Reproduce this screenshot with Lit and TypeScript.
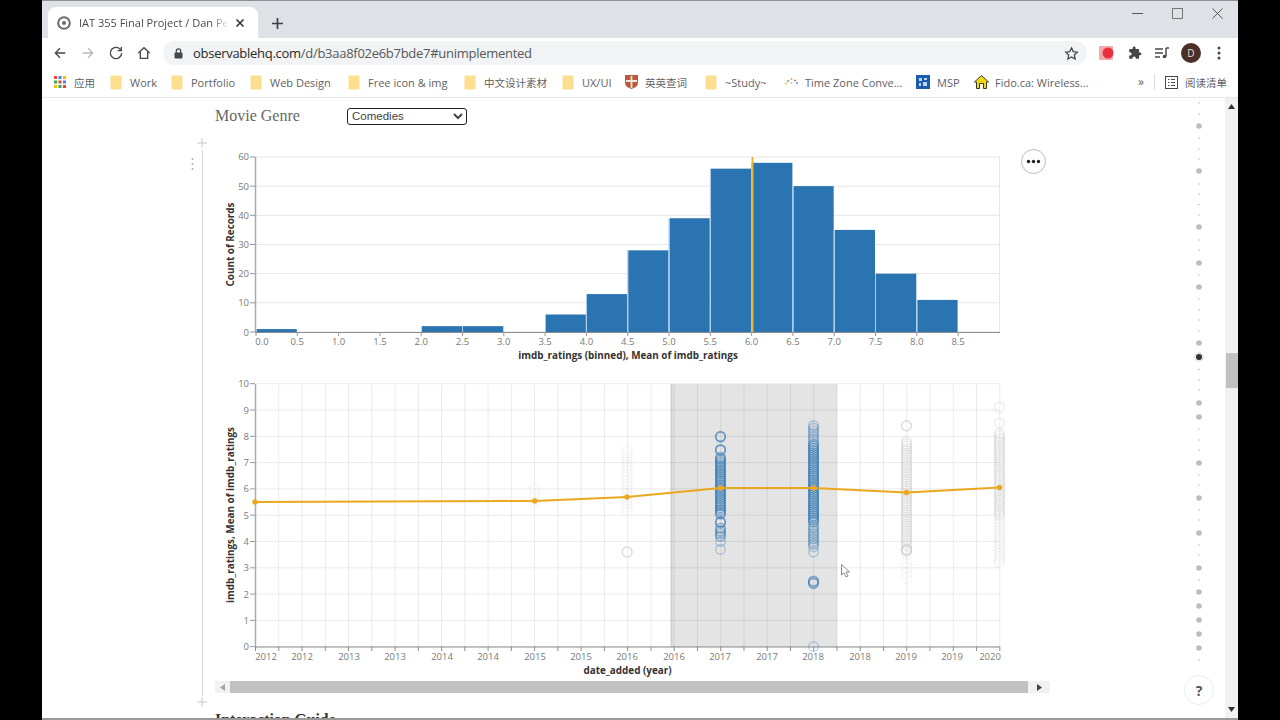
import { LitElement, html, css, svg } from "lit";
import { customElement } from "lit/decorators.js";

const range = (a: number, b: number, s: number) => {
  const o: number[] = [];
  for (let v = a; v >= b - 1e-6; v -= s) o.push(v);
  return o;
};

const BARS: [number, number][] = [[0, 1], [2, 2], [2.5, 2], [3.5, 6], [4, 13], [4.5, 28], [5, 39], [5.5, 56], [6, 58], [6.5, 50], [7, 35], [7.5, 20], [8, 11]];
const bx = (v: number) => 256 + v * 82.6;
const by = (c: number) => 332 - c * 2.917;
const sx = (k: number) => 255.5 + 23.26 * k;
const sy = (v: number) => 646.7 - v * 26.3;

const YEARS = [[266, "2012"], [302, "2012"], [349, "2013"], [395, "2013"], [442, "2014"], [488, "2014"], [535, "2015"], [581, "2015"], [627, "2016"], [674, "2016"], [720, "2017"], [767, "2017"], [813, "2018"], [860, "2018"], [906, "2019"], [952, "2019"], [990, "2020"]] as [number, string][];

const BLUE: [number, number[], number][] = [
  [720.5, [8, 7.97, 7.5, 7.47], 0.5],
  [720.5, range(7.2, 5.0, 0.08), 0.55],
  [720.5, [4.75, 4.72, 4.5, 4.4, 4.3, 4.2], 0.5],
  [720.5, [4.0, 3.7], 0.3],
  [813.5, range(8.4, 7.8, 0.1), 0.35],
  [813.5, range(7.7, 4.7, 0.08), 0.55],
  [813.5, range(4.6, 3.9, 0.1), 0.4],
  [813.5, [3.8, 3.6], 0.3],
  [813.5, [2.5, 2.45, 2.4], 0.5],
  [813.5, [0], 0.3],
];
const GREY: [number, number[], number][] = [
  [906.5, [8.4], 0.6],
  [906.5, range(7.8, 3.8, 0.09), 0.3],
  [906.5, [3.7, 3.65], 0.6],
  [906.5, [3.5, 3.2, 3, 2.8, 2.6], 0.12],
  [999.5, [9.1, 8.5], 0.3],
  [999.5, range(8.1, 5.0, 0.09), 0.28],
  [999.5, range(5.0, 3.1, 0.12), 0.16],
  [627, range(7.5, 5.1, 0.12), 0.1],
  [627, [3.6], 0.6],
  [534.7, [6, 5.8, 5.5], 0.15],
];
const LINE: [number, number][] = [[255, 502], [534.7, 501], [627, 497], [720.5, 488], [813.5, 488], [906.5, 492.5], [999.5, 487.5]];

const RAIL_BIG = [126, 171, 227, 263, 287, 343, 403, 417, 463, 498, 533, 568, 592, 606, 620, 634, 648];
const RAIL_SMALL = [103, 114, 138, 149, 159, 184, 194, 204.5, 215, 240, 250, 275, 299, 310, 320, 331, 369.5, 380, 390, 429, 440, 450, 475, 485, 510, 520, 545, 555, 580, 660];

type Mark = { x: number; next: number; label: string; icon: string; cjk?: boolean };
const BOOKMARKS: Mark[] = [
  { x: 53, next: 109, label: "应用", icon: "apps", cjk: true },
  { x: 109, next: 170, label: "Work", icon: "folder" },
  { x: 170, next: 249, label: "Portfolio", icon: "folder" },
  { x: 249, next: 347, label: "Web Design", icon: "folder" },
  { x: 347, next: 463, label: "Free icon & img", icon: "folder" },
  { x: 463, next: 561, label: "中文设计素材", icon: "folder", cjk: true },
  { x: 561, next: 624, label: "UX/UI", icon: "folder" },
  { x: 624, next: 704, label: "英英查词", icon: "shield", cjk: true },
  { x: 704, next: 784, label: "~Study~", icon: "folder" },
  { x: 784, next: 916, label: "Time Zone Conve...", icon: "dots" },
  { x: 916, next: 974, label: "MSP", icon: "msp" },
  { x: 974, next: 1134, label: "Fido.ca: Wireless...", icon: "home" },
];

const markIcon = (k: string) => {
  switch (k) {
    case "apps": {
      const cols = ["#ea4335", "#4285f4", "#fbbc05", "#34a853", "#ea4335", "#4285f4", "#fbbc05", "#34a853", "#ea4335"];
      return html`<svg width="12" height="12" viewBox="0 0 12 12">${cols.map((c, i) => svg`<rect x=${(i % 3) * 4.5} y=${Math.floor(i / 3) * 4.5} width="3" height="3" fill=${c}></rect>`)}</svg>`;
    }
    case "folder":
      return html`<svg width="12" height="15" viewBox="0 0 12 15"><rect x="0.5" y="0.5" width="11" height="14" rx="1" fill="#fbdf8e"></rect></svg>`;
    case "shield":
      return html`<svg width="13" height="14" viewBox="0 0 13 14"><path d="M0 0H13V7.500Q13 12 6.500 14 0 12 0 7.500Z" fill="#b9583c"></path><path d="M6.500 1V13M1 6H12" stroke="#f5e6da" stroke-width="1.800"></path></svg>`;
    case "dots":
      return html`<svg width="13" height="8" viewBox="0 0 13 8"><circle cx="6.500" cy="1" r="0.900" fill="#f0a030"></circle><circle cx="3" cy="3" r="0.900" fill="#4caf50"></circle><circle cx="10" cy="2.500" r="0.900" fill="#e0503a"></circle><circle cx="12" cy="5" r="0.900" fill="#4285f4"></circle><circle cx="6.500" cy="5" r="0.900" fill="#c0c0c0"></circle><circle cx="1" cy="5.500" r="0.900" fill="#f0c040"></circle></svg>`;
    case "msp":
      return html`<svg width="14" height="14" viewBox="0 0 14 14"><rect width="14" height="14" fill="#1a5cb0"></rect><path d="M3 3h3v3H3ZM8 3h3v2H8ZM3 8h2v3H3ZM7 7h4v4H7Z" fill="#bcd6f2"></path></svg>`;
    case "home":
      return html`<svg width="15" height="14" viewBox="0 0 15 14"><path d="M7.500 0.500 0.500 7H2.500V13.500H5.500V8.500H9.500V13.500H12.500V7H14.500Z" fill="#f0d818" stroke="#3a3a20" stroke-width="1"></path></svg>`;
  }
  return "";
};

@customElement("browser-chrome")
class BrowserChrome extends LitElement {
  static styles = css`
    :host { display: block; font-family: "Open Sans", "Noto Sans CJK SC", sans-serif; color: #5f6164; }
    svg { display: block; flex: none; }
    .topline { height: 1px; background: #8d8f91; }
    .tabstrip { height: 37px; background: #dee1e6; display: flex; align-items: flex-end; padding-left: 6px; }
    .tab { width: 210px; height: 31px; background: #fff; border-radius: 8px 8px 0 0; display: flex; align-items: center; padding-left: 9px; box-sizing: border-box; }
    .title { margin-left: 8px; width: 150px; font-size: 11px; white-space: nowrap; overflow: hidden; color: #4a4a4a; -webkit-mask-image: linear-gradient(90deg, #000 88%, transparent); mask-image: linear-gradient(90deg, #000 88%, transparent); }
    .tabx { margin-left: 6px; }
    .plus { margin-left: 13px; margin-bottom: 8px; }
    .winbtns { margin-left: auto; display: flex; gap: 29px; align-self: flex-start; margin-top: 7px; margin-right: 15px; }
    .toolbar { height: 30px; background: #fff; display: flex; align-items: center; padding-left: 10px; }
    .navs { display: flex; gap: 12px; }
    .omni { margin-left: 11px; width: 924px; height: 24px; border-radius: 12px; background: #f1f3f4; display: flex; align-items: center; padding-left: 11px; box-sizing: border-box; flex: none; }
    .url { margin-left: 10px; font-size: 13px; color: #55585a; letter-spacing: -0.28px; white-space: nowrap; }
    .url b { font-weight: 400; color: #26282a; }
    .star { margin-left: auto; margin-right: 8px; }
    .exts { display: flex; align-items: center; margin-left: 12px; }
    .puzzle, .queue { margin-left: 13px; }
    .avatar { width: 20px; height: 20px; border-radius: 50%; background: #4c2f27; color: #e8dcd6; font-size: 10px; display: flex; align-items: center; justify-content: center; margin: 0 16px 0 12px; flex: none; }
    .bookmarks { height: 29px; box-sizing: content-box; background: #fff; border-bottom: 1px solid #e6e6e6; display: flex; align-items: flex-start; padding-left: 11px; font-size: 11px; }
    .mark { display: flex; align-items: center; gap: 7px; white-space: nowrap; box-sizing: border-box; height: 20px; flex: none; margin-top: 4px; }
    .mark .ic { width: 14px; display: flex; justify-content: center; flex: none; }
    .cjk { font-size: 10.500px; }
    .more { width: 20px; box-sizing: border-box; font-size: 12px; color: #666; padding-left: 4px; flex: none; margin-top: 5px; }
    .sep { width: 1px; height: 16px; background: #ddd; margin: 6px 10px 0 0; flex: none; }
    .reading { display: flex; align-items: center; gap: 7px; white-space: nowrap; height: 20px; margin-top: 4px; }
  `;
  render() {
    return html`
      <div class="topline"></div>
      <div class="tabstrip">
        <div class="tab">
          <svg width="14" height="14" viewBox="0 0 14 14"><circle cx="7" cy="7" r="5.800" fill="none" stroke="#6a6a6a" stroke-width="2"></circle><circle cx="7" cy="7" r="2" fill="#6a6a6a"></circle></svg>
          <div class="title">IAT 355 Final Project / Dan Pei</div>
          <svg class="tabx" width="10" height="10" viewBox="0 0 10 10"><path d="M1.500 1.500 8.500 8.500M8.500 1.500 1.500 8.500" stroke="#333" stroke-width="1.600"></path></svg>
        </div>
        <svg class="plus" width="13" height="13" viewBox="0 0 13 13"><path d="M6.500 1V12M1 6.500H12" stroke="#3c4043" stroke-width="1.700"></path></svg>
        <div class="winbtns">
          <svg width="11" height="11" viewBox="0 0 11 11"><path d="M0 5.500H11" stroke="#555" stroke-width="1"></path></svg>
          <svg width="11" height="11" viewBox="0 0 11 11"><rect x="0.500" y="0.500" width="10" height="10" fill="none" stroke="#777"></rect></svg>
          <svg width="11" height="11" viewBox="0 0 11 11"><path d="M0.500 0.500 10.500 10.500M10.500 0.500 0.500 10.500" stroke="#555"></path></svg>
        </div>
      </div>
      <div class="toolbar">
        <div class="navs">
          <svg width="16" height="16" viewBox="0 0 24 24"><path d="M20 12H5M12 5l-7 7 7 7" fill="none" stroke="#45484b" stroke-width="2"></path></svg>
          <svg width="16" height="16" viewBox="0 0 24 24"><path d="M4 12H19M12 5l7 7-7 7" fill="none" stroke="#b6b9bc" stroke-width="2"></path></svg>
          <svg width="16" height="16" viewBox="0 0 24 24"><path d="M19.500 8A8.500 8.500 0 1 0 20.500 12M20 3V8.500H14.500" fill="none" stroke="#45484b" stroke-width="2"></path></svg>
          <svg width="16" height="16" viewBox="0 0 24 24"><path d="M3.500 12 12 4l8.500 8M6.500 10.500V20H17.500V10.500" fill="none" stroke="#45484b" stroke-width="2"></path></svg>
        </div>
        <div class="omni">
          <svg width="9" height="11" viewBox="0 0 9 11"><rect x="0.500" y="4.500" width="8" height="6" rx="1" fill="#45484b"></rect><path d="M2.300 5V3a2.200 2.200 0 0 1 4.400 0V5" fill="none" stroke="#45484b" stroke-width="1.200"></path></svg>
          <span class="url"><b>observablehq.com</b>/d/b3aa8f02e6b7bde7#unimplemented</span>
          <svg class="star" width="15" height="15" viewBox="0 0 24 24"><path d="M12 3l2.800 6 6.500.8-4.800 4.500 1.300 6.500L12 17.500 6.200 20.800l1.300-6.500L2.700 9.800 9.200 9Z" fill="none" stroke="#45484b" stroke-width="2"></path></svg>
        </div>
        <div class="exts">
          <svg width="16" height="16" viewBox="0 0 16 16"><rect x="0" y="1" width="14" height="14" rx="1" fill="#f5a8ae"></rect><circle cx="9" cy="8" r="5.500" fill="#e8303f"></circle></svg>
          <svg class="puzzle" width="14" height="14" viewBox="0 0 24 24"><path d="M20.500 11H19V7a2 2 0 0 0-2-2h-4V3.500a2.500 2.500 0 0 0-5 0V5H4a2 2 0 0 0-2 2v3.800h1.500a2.700 2.700 0 0 1 0 5.400H2V20a2 2 0 0 0 2 2h3.800v-1.500a2.700 2.700 0 0 1 5.400 0V22H17a2 2 0 0 0 2-2v-4h1.500a2.500 2.500 0 0 0 0-5Z" fill="#45484b"></path></svg>
          <svg class="queue" width="14" height="14" viewBox="0 0 14 14"><path d="M0 3H8M0 7H8M0 11H5M11 2V10.500" stroke="#45484b" stroke-width="1.500" fill="none"></path><path d="M11 2H14" stroke="#45484b" stroke-width="1.500"></path><circle cx="9.500" cy="10.500" r="1.800" fill="#45484b"></circle></svg>
          <div class="avatar">D</div>
          <svg width="4" height="14" viewBox="0 0 4 14"><circle cx="2" cy="2" r="1.500" fill="#45484b"></circle><circle cx="2" cy="7" r="1.500" fill="#45484b"></circle><circle cx="2" cy="12" r="1.500" fill="#45484b"></circle></svg>
        </div>
      </div>
      <div class="bookmarks">
        ${BOOKMARKS.map((m) => html`<div class="mark" style="width:${m.next - m.x}px"><span class="ic">${markIcon(m.icon)}</span><span class=${m.cjk ? "cjk" : ""}>${m.label}</span></div>`)}
        <div class="more">»</div>
        <div class="sep"></div>
        <div class="reading">
          <svg width="13" height="13" viewBox="0 0 13 13"><rect x="0.500" y="0.500" width="12" height="12" fill="none" stroke="#45484b"></rect><path d="M3 3.500H4.500M6 3.500H10M3 6.500H4.500M6 6.500H10M3 9.500H4.500M6 9.500H10" stroke="#45484b"></path></svg>
          <span class="cjk">阅读清单</span>
        </div>
      </div>
    `;
  }
}

@customElement("app-root")
class AppRoot extends LitElement {
  static styles = css`
    :host { display: block; width: 1280px; height: 720px; overflow: hidden; background: #000; }
    .shell { width: 1196px; height: 720px; margin-left: 42px; background: #fff; display: flex; flex-direction: column; overflow: hidden; }
    .page { flex: none; height: 620px; display: flex; overflow: hidden; background: #fff; }
    .strip { height: 2px; background: #9a9a9a; }
    .doc { width: 1143px; flex: none; padding-left: 145px; box-sizing: border-box; overflow: hidden; }
    .form { height: 16px; margin: 10px 0 11px 28px; display: flex; align-items: center; }
    .form label { width: 132px; font-family: "Liberation Serif", serif; font-size: 16px; color: #666; }
    select { width: 120px; height: 17px; box-sizing: border-box; padding: 0; font-family: "Liberation Sans", sans-serif; font-size: 11.500px; border: 1.500px solid #222; border-radius: 3px; background: #fff; color: #444; }
    .cell { display: flex; }
    svg { display: block; }
    .body { width: 847px; }
    text { font-family: "Open Sans", sans-serif; }
    .tick { font-size: 9.500px; fill: #7a7a7a; }
    .atitle { font-size: 9.900px; font-weight: 700; fill: #333; }
    .hscroll { width: 835px; height: 12px; display: flex; background: #f1f1f1; align-items: center; }
    .hscroll .arrow { width: 15px; display: flex; justify-content: center; flex: none; }
    .hscroll .thumb { height: 12px; width: 798px; background: #c2c1c1; flex: none; }
    .hscroll .arrow.r { width: 22px; }
    h2 { margin: 0 0 0 28px; font-family: "Liberation Serif", serif; font-size: 15.800px; line-height: 20px; font-weight: 700; color: #333; }
    .rail { width: 40px; flex: none; position: relative; }
    .help { position: absolute; left: -1px; bottom: 13px; width: 30px; height: 30px; box-sizing: border-box; border: 1px solid #ececec; border-radius: 50%; background: #fff; display: flex; align-items: center; justify-content: center; font-family: "Open Sans", sans-serif; font-size: 14px; font-weight: 700; color: #555; }
    .vscroll { width: 13px; flex: none; background: #f1f1f1; display: flex; flex-direction: column; align-items: center; }
    .vscroll .thumb { width: 12px; height: 35px; background: #c1c1c1; margin-top: 244px; flex: none; }
    .vscroll svg.up { margin-top: 6px; flex: none; }
    .vscroll svg.down { margin-top: auto; margin-bottom: 6px; flex: none; }
  `;

  chart1() {
    const ys = [0, 10, 20, 30, 40, 50, 60];
    return svg`
      ${ys.map((c) => svg`<path d="M255 ${by(c)}H1000" stroke="#e6e6e6"></path><path d="M250 ${by(c)}H255" stroke="#999"></path><text class="tick" x="249" y=${by(c) + 3.5} text-anchor="end">${c}</text>`)}
      <path d="M999.500 157V332" stroke="#e6e6e6"></path>
      ${BARS.map(([v, c]) => svg`<rect x=${bx(v) + 0.5} y=${by(c)} width="40.300" height=${332 - by(c)} fill="#2b74b2"></rect>`)}
      ${BARS.filter(([v]) => v >= 2.5 && v !== 3.5).map(([v, c]) => svg`<path d="M${bx(v)} ${by(c)}V332" stroke="#a8cdea"></path>`)}
      <path d="M752.500 157V332" stroke="#e9b431" stroke-width="2"></path>
      <path d="M255.500 157V332" stroke="#aaa" stroke-width="1.500"></path>
      <path d="M255 332.500H1000" stroke="#8c8c8c"></path>
      ${range(8.5, 0, 0.5).map((v) => svg`<path d="M${bx(v)} 332V336" stroke="#999"></path><text class="tick" x=${v === 0 ? 262 : bx(v)} y="345" text-anchor="middle">${v.toFixed(1)}</text>`)}
      <text class="atitle" x="628" y="358.500" text-anchor="middle">imdb_ratings (binned), Mean of imdb_ratings</text>
      <text class="atitle" transform="translate(233.500 244.500) rotate(-90)" text-anchor="middle">Count of Records</text>
      <circle cx="1033.500" cy="161.500" r="12" fill="#fff" stroke="#bdbdbd"></circle>
      ${[-5, 0, 5].map((d) => svg`<circle cx=${1033.5 + d} cy="161.500" r="1.700" fill="#222"></circle>`)}
    `;
  }

  chart2() {
    const h = [0, 1, 2, 3, 4, 5, 6, 7, 8, 9, 10];
    const ks = Array.from({ length: 33 }, (_, i) => i);
    return svg`
      <rect x="671" y="384" width="166" height="262.700" fill="#e4e4e4"></rect>
      <path d="M671.500 384V646.700" stroke="#d0d0d0" stroke-width="2"></path>
      ${ks.map((k) => svg`<path d="M${sx(k)} 384V646.700" stroke="#000" stroke-opacity="0.080"></path><path d="M${sx(k)} 646.700V651" stroke="#8c8c8c"></path>`)}
      ${h.map((v) => svg`<path d="M255 ${sy(v)}H1000" stroke="#000" stroke-opacity="0.080"></path><path d="M250 ${sy(v)}H255" stroke="#999"></path><text class="tick" x="249" y=${sy(v) + 3.5} text-anchor="end">${v}</text>`)}
      <path d="M255.500 384V647" stroke="#aaa" stroke-width="1.500"></path>
      <path d="M255 647H1000" stroke="#8c8c8c"></path>
      ${GREY.map(([x, vs, o]) => vs.map((v) => svg`<circle cx=${x} cy=${sy(v)} r="5" fill="none" stroke="#c4c4c4" stroke-width="1.400" opacity=${o}></circle>`))}
      ${BLUE.map(([x, vs, o]) => vs.map((v) => svg`<circle cx=${x} cy=${sy(v)} r="4.800" fill="none" stroke="#2b74b2" stroke-width="1.500" opacity=${o}></circle>`))}
      <polyline points=${LINE.map((p) => p.join(",")).join(" ")} fill="none" stroke="#eaa81f" stroke-width="2"></polyline>
      ${LINE.map(([x, y]) => svg`<circle cx=${x} cy=${y} r="2.700" fill="#eaa81f"></circle>`)}
      ${YEARS.map(([x, l]) => svg`<text class="tick" x=${x} y="660" text-anchor="middle">${l}</text>`)}
      <text class="atitle" x="627.500" y="673.500" text-anchor="middle">date_added (year)</text>
      <text class="atitle" transform="translate(233.500 515) rotate(-90)" text-anchor="middle">imdb_ratings, Mean of imdb_ratings</text>
      <path d="M841.500 564.500V575L844 572.800 846 577 848 576 846 572H849.500Z" fill="#fff" stroke="#6a6f75" stroke-width="0.800"></path>
    `;
  }

  render() {
    return html`
      <div class="shell">
        <browser-chrome></browser-chrome>
        <div class="page">
          <div class="doc">
            <div class="form">
              <label>Movie Genre</label>
              <select><option>Comedies</option></select>
            </div>
            <div class="cell">
              <svg width="28" height="575" viewBox="187 135 28 575">
                <path d="M197 143H207M202 138V148M197 702H207M202 697V707" stroke="#c8c8c8"></path>
                <path d="M202.500 150V696" stroke="#d8d8d8"></path>
                ${[159, 164, 169].map((y) => svg`<circle cx="192.500" cy=${y} r="1" fill="#b0b0b0"></circle>`)}
              </svg>
              <div class="body">
                <svg width="847" height="546" viewBox="215 135 847 546">${this.chart1()}${this.chart2()}</svg>
                <div class="hscroll">
                  <div class="arrow"><svg width="5" height="7" viewBox="0 0 5 7"><path d="M5 0V7L0 3.500Z" fill="#a5a5a5"></path></svg></div>
                  <div class="thumb"></div>
                  <div class="arrow r"><svg width="5" height="7" viewBox="0 0 5 7"><path d="M0 0V7L5 3.500Z" fill="#444"></path></svg></div>
                </div>
              </div>
            </div>
            <h2>Interaction Guide</h2>
          </div>
          <div class="rail">
            <svg width="40" height="620" viewBox="1185 98 40 620">
              ${RAIL_SMALL.map((y) => svg`<circle cx="1199" cy=${y} r="0.800" fill="#bbb"></circle>`)}
              ${RAIL_BIG.map((y) => svg`<circle cx="1199" cy=${y} r="2.800" fill="#bcbcbc"></circle>`)}
              <circle cx="1199" cy="357" r="5" fill="#e8e8e8"></circle>
              <circle cx="1199" cy="357" r="3" fill="#333"></circle>
            </svg>
            <div class="help">?</div>
          </div>
          <div class="vscroll">
            <svg class="up" width="7" height="5" viewBox="0 0 7 5"><path d="M0 5H7L3.500 0Z" fill="#333"></path></svg>
            <div class="thumb"></div>
            <svg class="down" width="7" height="5" viewBox="0 0 7 5"><path d="M0 0H7L3.500 5Z" fill="#333"></path></svg>
          </div>
        </div>
        <div class="strip"></div>
      </div>
    `;
  }
}
